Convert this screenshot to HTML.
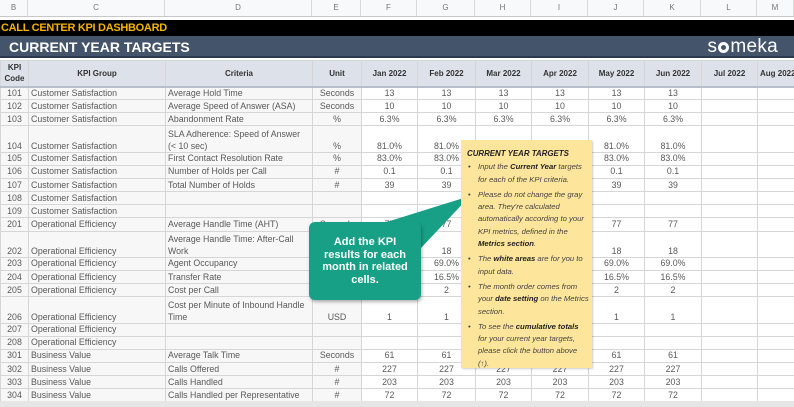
<!DOCTYPE html>
<html><head><meta charset="utf-8">
<style>
*{margin:0;padding:0;box-sizing:border-box}
body{width:794px;height:407px;overflow:hidden;background:#fff;font-family:"Liberation Sans",sans-serif;position:relative;color:#555}
.colh{position:absolute;top:0;left:0;width:794px;height:17px;background:#f8f9fa;border-bottom:1px solid #c8c8c8;font-size:8px;color:#777}
.colh div{position:absolute;top:0;height:16px;line-height:16px;text-align:center;border-right:1px solid #dadada}
.black{position:absolute;top:20px;left:0;width:794px;height:16px;background:#000;color:#f4b400;font-size:11px;font-weight:bold;line-height:16px;padding-left:1px;letter-spacing:-0.3px}
.blue{position:absolute;top:36px;left:0;width:794px;height:22px;background:#44546a;border-bottom:2px solid #2c3a50;color:#fff;font-size:14px;font-weight:bold;line-height:22px;padding-left:9px}
.logo{position:absolute;right:16px;top:36px;color:#fff;font-size:19px;line-height:22px;letter-spacing:0.3px}
.logo i{display:inline-block;width:11px;height:11px;border:3px solid #fff;border-radius:50%;margin:0 1px;vertical-align:-1px}
table{position:absolute;top:60px;left:0;border-collapse:collapse;table-layout:fixed;width:794px;font-size:8.8px}
td{border:1px solid #d6d6d6;white-space:nowrap;overflow:hidden;padding:0 2px;height:13.15px;line-height:11px;vertical-align:middle;color:#595959}
tr.h td{background:#dde2ea;font-weight:bold;color:#333;text-align:center;height:26px;vertical-align:middle;font-size:8px;line-height:11px;border-bottom:2px solid #b8bfca}
tr.t td{height:26.3px;vertical-align:bottom;line-height:12px}
td.g{background:#f7f7f7}
td.c{text-align:center}
td.w{white-space:normal}
.note{position:absolute;left:461px;top:140px;width:131px;height:228px;background:#fde59b;box-shadow:1px 1px 2px rgba(0,0,0,.2);font-size:7.7px;color:#444;font-style:italic;padding:8px 3px 0 6px;line-height:12.3px;overflow:hidden}
.note h4{font-size:7.9px;font-weight:bold;margin-bottom:1px;color:#222}
.note ul{list-style:none}
.note li{position:relative;padding-left:11px;margin-bottom:3px}
.note li b{color:#222}
.note li:before{content:"•";position:absolute;left:1px;font-style:normal}
.call{position:absolute;left:309px;top:222px;width:112px;height:78px;background:#17a085;border-radius:6px;color:#fff;font-weight:bold;font-size:11px;text-align:center;line-height:12.5px;padding-top:14px;box-shadow:1px 2px 3px rgba(0,0,0,.3)}
.bot{position:absolute;top:401px;left:0;width:794px;height:6px;background:#e6e6e6}
</style></head><body>
<div class="colh">
<div style="left:0;width:28px">B</div><div style="left:28px;width:137px">C</div><div style="left:165px;width:147px">D</div><div style="left:312px;width:49px">E</div><div style="left:361px;width:56px">F</div><div style="left:417px;width:58px">G</div><div style="left:475px;width:56px">H</div><div style="left:531px;width:57px">I</div><div style="left:588px;width:56px">J</div><div style="left:644px;width:57px">K</div><div style="left:701px;width:56px">L</div><div style="left:757px;width:37px">M</div>
</div>
<div class="black">CALL CENTER KPI DASHBOARD</div>
<div class="blue">CURRENT YEAR TARGETS</div>
<div class="logo">s<i></i>meka</div>
<table>
<colgroup><col style="width:28px"><col style="width:137px"><col style="width:147px"><col style="width:49px"><col style="width:56px"><col style="width:58px"><col style="width:56px"><col style="width:57px"><col style="width:56px"><col style="width:57px"><col style="width:56px"><col style="width:37px"></colgroup>
<tr class="h"><td>KPI<br>Code</td><td>KPI Group</td><td>Criteria</td><td>Unit</td><td>Jan 2022</td><td>Feb 2022</td><td>Mar 2022</td><td>Apr 2022</td><td>May 2022</td><td>Jun 2022</td><td>Jul 2022</td><td>Aug 2022</td></tr>
<tr><td class="g c">101</td><td class="g">Customer Satisfaction</td><td class="g">Average Hold Time</td><td class="g c">Seconds</td><td class="c">13</td><td class="c">13</td><td class="c">13</td><td class="c">13</td><td class="c">13</td><td class="c">13</td><td></td><td></td></tr>
<tr><td class="g c">102</td><td class="g">Customer Satisfaction</td><td class="g">Average Speed of Answer (ASA)</td><td class="g c">Seconds</td><td class="c">10</td><td class="c">10</td><td class="c">10</td><td class="c">10</td><td class="c">10</td><td class="c">10</td><td></td><td></td></tr>
<tr><td class="g c">103</td><td class="g">Customer Satisfaction</td><td class="g">Abandonment Rate</td><td class="g c">%</td><td class="c">6.3%</td><td class="c">6.3%</td><td class="c">6.3%</td><td class="c">6.3%</td><td class="c">6.3%</td><td class="c">6.3%</td><td></td><td></td></tr>
<tr class="t"><td class="g c">104</td><td class="g">Customer Satisfaction</td><td class="g w">SLA Adherence: Speed of Answer (&lt; 10 sec)</td><td class="g c">%</td><td class="c">81.0%</td><td class="c">81.0%</td><td class="c">81.0%</td><td class="c">81.0%</td><td class="c">81.0%</td><td class="c">81.0%</td><td></td><td></td></tr>
<tr><td class="g c">105</td><td class="g">Customer Satisfaction</td><td class="g">First Contact Resolution Rate</td><td class="g c">%</td><td class="c">83.0%</td><td class="c">83.0%</td><td class="c">83.0%</td><td class="c">83.0%</td><td class="c">83.0%</td><td class="c">83.0%</td><td></td><td></td></tr>
<tr><td class="g c">106</td><td class="g">Customer Satisfaction</td><td class="g">Number of Holds per Call</td><td class="g c">#</td><td class="c">0.1</td><td class="c">0.1</td><td class="c">0.1</td><td class="c">0.1</td><td class="c">0.1</td><td class="c">0.1</td><td></td><td></td></tr>
<tr><td class="g c">107</td><td class="g">Customer Satisfaction</td><td class="g">Total Number of Holds</td><td class="g c">#</td><td class="c">39</td><td class="c">39</td><td class="c">39</td><td class="c">39</td><td class="c">39</td><td class="c">39</td><td></td><td></td></tr>
<tr><td class="g c">108</td><td class="g">Customer Satisfaction</td><td class="g"></td><td class="g"></td><td></td><td></td><td></td><td></td><td></td><td></td><td></td><td></td></tr>
<tr><td class="g c">109</td><td class="g">Customer Satisfaction</td><td class="g"></td><td class="g"></td><td></td><td></td><td></td><td></td><td></td><td></td><td></td><td></td></tr>
<tr><td class="g c">201</td><td class="g">Operational Efficiency</td><td class="g">Average Handle Time (AHT)</td><td class="g c">Seconds</td><td class="c">77</td><td class="c">77</td><td class="c">77</td><td class="c">77</td><td class="c">77</td><td class="c">77</td><td></td><td></td></tr>
<tr class="t"><td class="g c">202</td><td class="g">Operational Efficiency</td><td class="g w">Average Handle Time: After-Call Work</td><td class="g c">Seconds</td><td class="c">18</td><td class="c">18</td><td class="c">18</td><td class="c">18</td><td class="c">18</td><td class="c">18</td><td></td><td></td></tr>
<tr><td class="g c">203</td><td class="g">Operational Efficiency</td><td class="g">Agent Occupancy</td><td class="g c">%</td><td class="c">69.0%</td><td class="c">69.0%</td><td class="c">69.0%</td><td class="c">69.0%</td><td class="c">69.0%</td><td class="c">69.0%</td><td></td><td></td></tr>
<tr><td class="g c">204</td><td class="g">Operational Efficiency</td><td class="g">Transfer Rate</td><td class="g c">%</td><td class="c">16.5%</td><td class="c">16.5%</td><td class="c">16.5%</td><td class="c">16.5%</td><td class="c">16.5%</td><td class="c">16.5%</td><td></td><td></td></tr>
<tr><td class="g c">205</td><td class="g">Operational Efficiency</td><td class="g">Cost per Call</td><td class="g c">USD</td><td class="c">2</td><td class="c">2</td><td class="c">2</td><td class="c">2</td><td class="c">2</td><td class="c">2</td><td></td><td></td></tr>
<tr class="t"><td class="g c">206</td><td class="g">Operational Efficiency</td><td class="g w">Cost per Minute of Inbound Handle Time</td><td class="g c">USD</td><td class="c">1</td><td class="c">1</td><td class="c">1</td><td class="c">1</td><td class="c">1</td><td class="c">1</td><td></td><td></td></tr>
<tr><td class="g c">207</td><td class="g">Operational Efficiency</td><td class="g"></td><td class="g"></td><td></td><td></td><td></td><td></td><td></td><td></td><td></td><td></td></tr>
<tr><td class="g c">208</td><td class="g">Operational Efficiency</td><td class="g"></td><td class="g"></td><td></td><td></td><td></td><td></td><td></td><td></td><td></td><td></td></tr>
<tr><td class="g c">301</td><td class="g">Business Value</td><td class="g">Average Talk Time</td><td class="g c">Seconds</td><td class="c">61</td><td class="c">61</td><td class="c">61</td><td class="c">61</td><td class="c">61</td><td class="c">61</td><td></td><td></td></tr>
<tr><td class="g c">302</td><td class="g">Business Value</td><td class="g">Calls Offered</td><td class="g c">#</td><td class="c">227</td><td class="c">227</td><td class="c">227</td><td class="c">227</td><td class="c">227</td><td class="c">227</td><td></td><td></td></tr>
<tr><td class="g c">303</td><td class="g">Business Value</td><td class="g">Calls Handled</td><td class="g c">#</td><td class="c">203</td><td class="c">203</td><td class="c">203</td><td class="c">203</td><td class="c">203</td><td class="c">203</td><td></td><td></td></tr>
<tr><td class="g c">304</td><td class="g">Business Value</td><td class="g">Calls Handled per Representative</td><td class="g c">#</td><td class="c">72</td><td class="c">72</td><td class="c">72</td><td class="c">72</td><td class="c">72</td><td class="c">72</td><td></td><td></td></tr>
</table>
<svg style="position:absolute;left:0;top:0" width="794" height="407"><polygon points="380,224 470,196 421,248" fill="#17a085"/></svg>
<div class="call">Add the KPI<br>results for each<br>month in related<br>cells.</div>
<div class="note"><h4>CURRENT YEAR TARGETS</h4><ul>
<li>Input the <b>Current Year</b> targets for each of the KPI criteria.</li>
<li>Please do not change the gray area. They're calculated automatically according to your KPI metrics, defined in the <b>Metrics section</b>.</li>
<li>The <b>white areas</b> are for you to input data.</li>
<li>The month order comes from your <b>date setting</b> on the Metrics section.</li>
<li>To see the <b>cumulative totals</b> for your current year targets, please click the button above (↑).</li>
</ul></div>
<div class="bot"></div>
</body></html>
